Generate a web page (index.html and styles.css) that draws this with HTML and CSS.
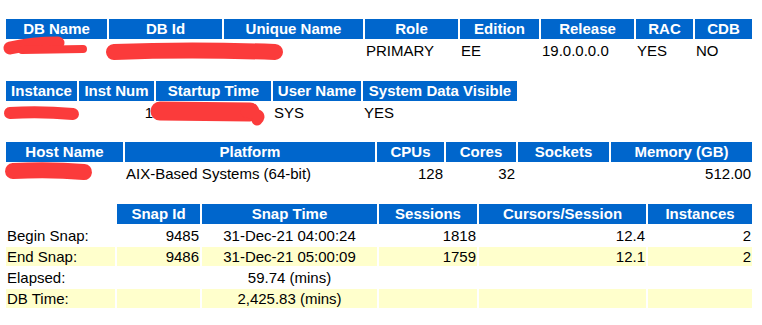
FILE: index.html
```html
<!DOCTYPE html>
<html lang="en">
<head>
  <meta charset="UTF-8">
  <link rel="stylesheet" href="styles.css">
  <title>AWR Report</title>
</head>
<body>
  <div class="report">
    <!-- database -->
    <table class="awr t_db">
      <colgroup>
        <col class="c101"><col class="c113"><col class="c139"><col class="c93">
        <col class="c79"><col class="c93"><col class="c57"><col class="c57">
      </colgroup>
      <tr>
        <th>DB Name</th><th>DB Id</th><th>Unique Name</th><th>Role</th>
        <th>Edition</th><th>Release</th><th>RAC</th><th>CDB</th>
      </tr>
      <tr>
        <td></td><td class="num"></td><td></td><td>PRIMARY</td>
        <td>EE</td><td>19.0.0.0.0</td><td>YES</td><td>NO</td>
      </tr>
    </table>

    <!-- instance -->
    <table class="awr t_inst">
      <colgroup>
        <col class="c71"><col class="c75"><col class="c115"><col class="c88"><col class="c154">
      </colgroup>
      <tr>
        <th>Instance</th><th>Inst Num</th><th>Startup Time</th><th>User Name</th><th>System Data Visible</th>
      </tr>
      <tr>
        <td></td><td class="num">1</td><td class="mid"></td><td>SYS</td><td>YES</td>
      </tr>
    </table>

    <!-- host -->
    <table class="awr t_host">
      <colgroup>
        <col class="c117"><col class="c250"><col class="c67"><col class="c70"><col class="c91"><col class="c141">
      </colgroup>
      <tr>
        <th>Host Name</th><th>Platform</th><th>CPUs</th><th>Cores</th><th>Sockets</th><th>Memory (GB)</th>
      </tr>
      <tr>
        <td></td><td>AIX-Based Systems (64-bit)</td><td class="num">128</td>
        <td class="num">32</td><td></td><td class="num">512.00</td>
      </tr>
    </table>

    <!-- snapshots -->
    <table class="awr t_snap">
      <colgroup>
        <col class="c109"><col class="c83"><col class="c175"><col class="c98"><col class="c167"><col class="c104">
      </colgroup>
      <tr>
        <td></td><th>Snap Id</th><th>Snap Time</th><th>Sessions</th><th>Cursors/Session</th><th>Instances</th>
      </tr>
      <tr>
        <td>Begin Snap:</td><td class="num">9485</td><td class="mid">31-Dec-21 04:00:24</td>
        <td class="num">1818</td><td class="num">12.4</td><td class="num">2</td>
      </tr>
      <tr class="alt">
        <td>End Snap:</td><td class="num">9486</td><td class="mid">31-Dec-21 05:00:09</td>
        <td class="num">1759</td><td class="num">12.1</td><td class="num">2</td>
      </tr>
      <tr>
        <td>Elapsed:</td><td></td><td class="mid">59.74 (mins)</td><td></td><td></td><td></td>
      </tr>
      <tr class="alt">
        <td>DB Time:</td><td></td><td class="mid">2,425.83 (mins)</td><td></td><td></td><td></td>
      </tr>
    </table>

    <!-- redaction marks -->
    <svg class="scribbles" width="762" height="325" viewBox="0 0 762 325">
      <g fill="none" stroke="#fb3b3b" stroke-linecap="round" stroke-linejoin="round">
        <path d="M10 48 Q 32 43 58 43" stroke-width="13"/>
        <path d="M22 50 L 83 49" stroke-width="8"/>
        <path d="M114 52 Q 190 49 275 52" stroke-width="16"/>
        <path d="M10 113 Q 40 111 73 114" stroke-width="12"/>
        <path d="M160 111 L 250 112" stroke-width="19"/>
        <path d="M246 112 Q 264 114 257 120" stroke-width="11"/>
        <path d="M13 171 Q 50 169 84 172" stroke-width="16"/>
      </g>
    </svg>
  </div>
</body>
</html>
```

FILE: styles.css
```css
/* Basics */
body {
  margin: 0;
  background-color: #ffffff;
  color: #000000;
  font-family: "Liberation Sans", Arial, Helvetica, sans-serif;
}

.report {
  position: relative;
  padding: 17px 0 0 4px;
}

/* Tables */
.awr {
  table-layout: fixed;
  border-collapse: separate;
  border-spacing: 2px;
  margin-bottom: 17px;
  font-size: 15px;
  line-height: 17px;
}

.t_db, .t_host, .t_snap {
  width: 750px;
}

.t_inst {
  width: 515px;
  margin-bottom: 16px;
}

.awr th {
  padding: 1px 4px 2px 4px;
  background-color: #0066cc;
  color: #ffffff;
  font-weight: bold;
  text-align: center;
  white-space: nowrap;
}

.awr td {
  padding: 1px;
  height: 17px;
  background-color: #ffffff;
  text-align: left;
  vertical-align: top;
  white-space: nowrap;
}

.awr tr.alt td {
  background-color: #ffffcc;
}

.awr td.num {
  text-align: right;
}

.awr td.mid {
  text-align: center;
}

/* Column widths */
.c57 { width: 57px; }
.c67 { width: 67px; }
.c70 { width: 70px; }
.c71 { width: 71px; }
.c75 { width: 75px; }
.c79 { width: 79px; }
.c83 { width: 83px; }
.c88 { width: 88px; }
.c91 { width: 91px; }
.c93 { width: 93px; }
.c98 { width: 98px; }
.c101 { width: 101px; }
.c104 { width: 104px; }
.c109 { width: 109px; }
.c113 { width: 113px; }
.c115 { width: 115px; }
.c117 { width: 117px; }
.c139 { width: 139px; }
.c141 { width: 141px; }
.c154 { width: 154px; }
.c167 { width: 167px; }
.c175 { width: 175px; }
.c250 { width: 250px; }

/* Redaction overlay */
.scribbles {
  position: absolute;
  top: 0;
  left: 0;
  pointer-events: none;
}
```
